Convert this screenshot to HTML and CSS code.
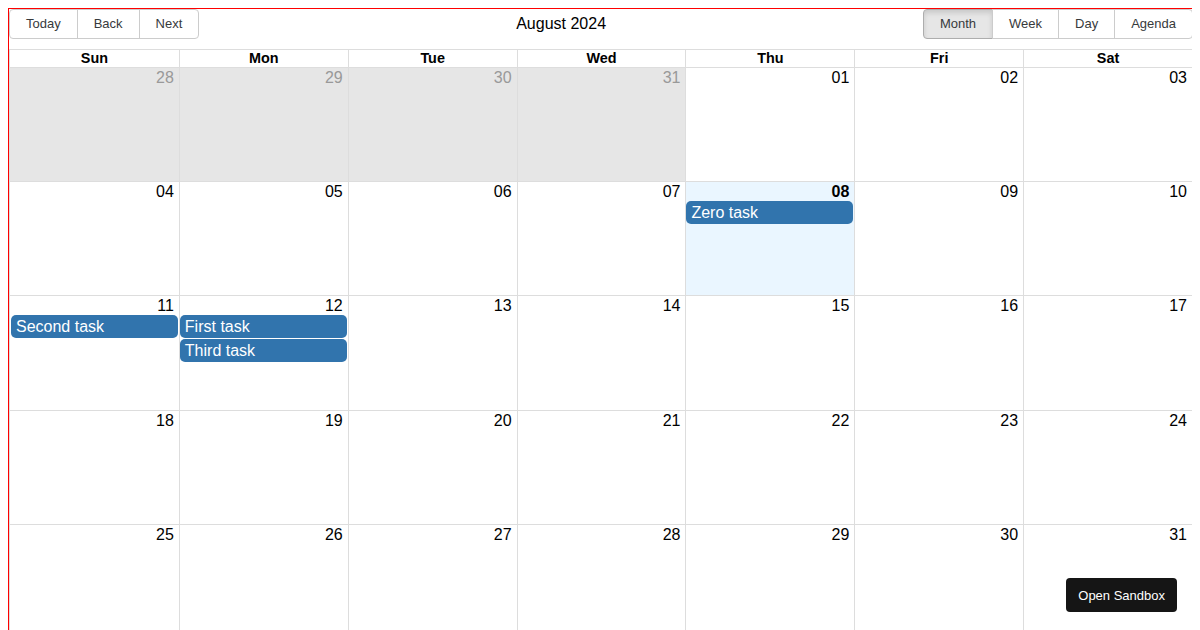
FILE: index.html
```html
<!DOCTYPE html>
<html>
<head>
<meta charset="utf-8">
<link rel="stylesheet" href="styles.css">
</head>
<body>
<div class="frame">
  <div class="calendar">
    <div class="toolbar">
      <div class="btn-group">
        <button class="btn">Today</button>
        <button class="btn">Back</button>
        <button class="btn">Next</button>
      </div>
      <div class="label">August 2024</div>
      <div class="btn-group">
        <button class="btn active">Month</button>
        <button class="btn">Week</button>
        <button class="btn">Day</button>
        <button class="btn">Agenda</button>
      </div>
    </div>
    <div class="month">
      <div class="head-row">
        <div class="head">Sun</div><div class="head">Mon</div><div class="head">Tue</div><div class="head">Wed</div><div class="head">Thu</div><div class="head">Fri</div><div class="head">Sat</div>
      </div>
      <div class="week">
        <div class="cell off"><div class="date">28</div></div>
        <div class="cell off"><div class="date">29</div></div>
        <div class="cell off"><div class="date">30</div></div>
        <div class="cell off"><div class="date">31</div></div>
        <div class="cell"><div class="date">01</div></div>
        <div class="cell"><div class="date">02</div></div>
        <div class="cell"><div class="date">03</div></div>
      </div>
      <div class="week">
        <div class="cell"><div class="date">04</div></div>
        <div class="cell"><div class="date">05</div></div>
        <div class="cell"><div class="date">06</div></div>
        <div class="cell"><div class="date">07</div></div>
        <div class="cell today"><div class="date now">08</div><div class="event">Zero task</div></div>
        <div class="cell"><div class="date">09</div></div>
        <div class="cell"><div class="date">10</div></div>
      </div>
      <div class="week">
        <div class="cell"><div class="date">11</div><div class="event">Second task</div></div>
        <div class="cell"><div class="date">12</div><div class="event">First task</div><div class="event">Third task</div></div>
        <div class="cell"><div class="date">13</div></div>
        <div class="cell"><div class="date">14</div></div>
        <div class="cell"><div class="date">15</div></div>
        <div class="cell"><div class="date">16</div></div>
        <div class="cell"><div class="date">17</div></div>
      </div>
      <div class="week">
        <div class="cell"><div class="date">18</div></div>
        <div class="cell"><div class="date">19</div></div>
        <div class="cell"><div class="date">20</div></div>
        <div class="cell"><div class="date">21</div></div>
        <div class="cell"><div class="date">22</div></div>
        <div class="cell"><div class="date">23</div></div>
        <div class="cell"><div class="date">24</div></div>
      </div>
      <div class="week">
        <div class="cell"><div class="date">25</div></div>
        <div class="cell"><div class="date">26</div></div>
        <div class="cell"><div class="date">27</div></div>
        <div class="cell"><div class="date">28</div></div>
        <div class="cell"><div class="date">29</div></div>
        <div class="cell"><div class="date">30</div></div>
        <div class="cell"><div class="date">31</div></div>
      </div>
    </div>
  </div>
</div>
<button class="sandbox">Open Sandbox</button>
</body>
</html>
```
FILE: styles.css
```css
html, body {
  margin: 0;
  padding: 0;
}
body {
  margin: 8px;
  font-family: "Liberation Sans", Arial, sans-serif;
  font-size: 16px;
  color: #000;
  background: #fff;
}
.frame {
  width: 100%;
  border: 1px solid red;
}
.calendar {
  height: 630px;
  display: flex;
  flex-direction: column;
  box-sizing: border-box;
}
.toolbar {
  display: flex;
  align-items: center;
  margin-bottom: 10px;
  font-size: 16px;
}
.btn-group {
  display: inline-flex;
  white-space: nowrap;
}
.btn {
  font-family: "Liberation Sans", Arial, sans-serif;
  font-size: 13px;
  line-height: 16px;
  color: #373a3c;
  background: none;
  border: 1px solid #ccc;
  padding: 6px 16px;
  margin: 0;
  border-radius: 0;
}
.btn + .btn {
  margin-left: -1px;
}
.btn:first-child {
  border-radius: 4px 0 0 4px;
}
.btn:last-child {
  border-radius: 0 4px 4px 0;
}
.btn.active {
  background: #e6e6e6;
  border-color: #adadad;
  box-shadow: inset 0 3px 5px rgba(0, 0, 0, 0.125);
}
.label {
  flex-grow: 1;
  padding: 0 10px;
  text-align: center;
}
.month {
  flex: 1 0 0;
  display: flex;
  flex-direction: column;
  border: 1px solid #ddd;
  min-height: 0;
}
.head-row {
  display: grid;
  grid-template-columns: repeat(7, 1fr);
}
.head {
  text-align: center;
  font-weight: bold;
  font-size: 14.4px;
  line-height: 17px;
  padding: 0 3px;
  border-bottom: 1px solid #ddd;
}
.head + .head {
  border-left: 1px solid #ddd;
}
.week {
  flex: 1 0 0;
  display: grid;
  grid-template-columns: repeat(7, 1fr);
  min-height: 0;
  overflow: hidden;
}
.week + .week {
  border-top: 1px solid #ddd;
}
.cell {
  min-width: 0;
  padding: 0 1px;
}
.cell + .cell {
  border-left: 1px solid #ddd;
  padding-left: 0;
}
.cell.off {
  background: #e6e6e6;
}
.cell.off .date {
  color: #999;
}
.cell.today {
  background: #eaf6ff;
}
.date {
  text-align: right;
  padding-right: 4px;
  line-height: 19px;
}
.date.now {
  font-weight: bold;
}
.event {
  background: #3174ad;
  color: #fff;
  border-radius: 5px;
  padding: 2px 5px;
  line-height: 19px;
  margin-bottom: 1px;
  white-space: nowrap;
  overflow: hidden;
  text-overflow: ellipsis;
}
.sandbox {
  position: fixed;
  right: 23px;
  bottom: 18px;
  height: 34px;
  padding: 0 12px;
  background: #151515;
  color: #fff;
  border: none;
  border-radius: 4px;
  font-family: "Liberation Sans", Arial, sans-serif;
  font-size: 13px;
}
```
